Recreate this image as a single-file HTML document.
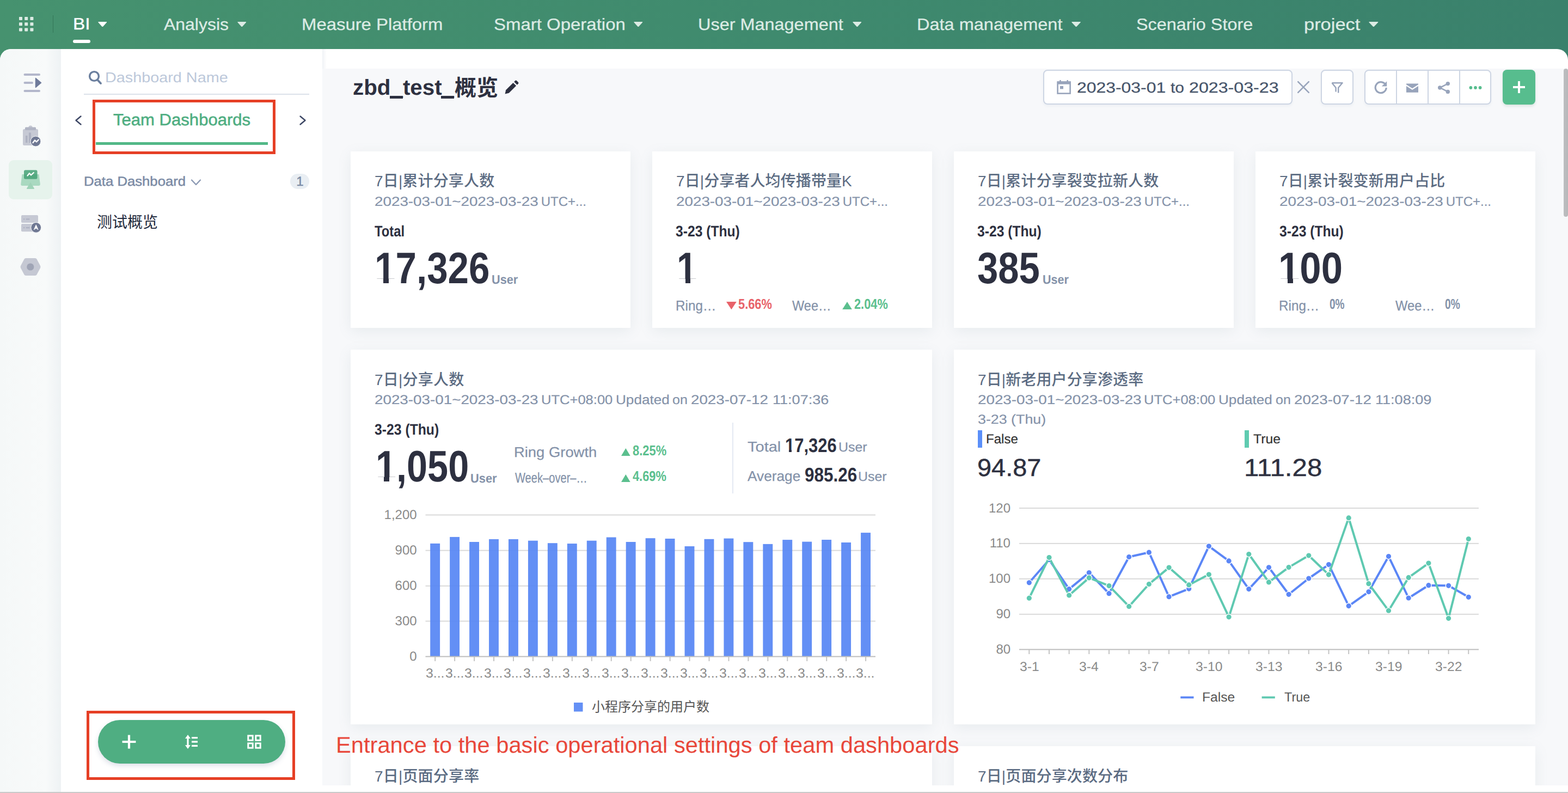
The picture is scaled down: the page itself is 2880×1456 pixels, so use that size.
<!DOCTYPE html>
<html lang="en"><head><meta charset="utf-8"><title>zbd_test dashboard</title><style>
html,body{margin:0;padding:0}
body{width:2880px;height:1456px;overflow:hidden;position:relative;background:#fff;font-family:"Liberation Sans",sans-serif}
.a,.t,.cj{position:absolute}
.t{white-space:pre;transform-origin:0 0;display:block;text-rendering:geometricPrecision}
.cj{overflow:visible}
.cj text{font-family:"Liberation Sans","Noto Sans CJK SC",sans-serif}
#hdr{left:0;top:0;width:2880px;height:120px;background:linear-gradient(90deg,#46926f 0%,#3f8a6e 50%,#3a816c 100%)}
#app{left:0;top:90px;width:2880px;height:1364px;background:#fff;border-radius:20px 20px 0 0;overflow:hidden}
#ib{left:0;top:0;width:112px;height:1364px;background:linear-gradient(90deg,#f5f8f8 0%,#f8fafa 75%,#eef2f4 100%)}
#mainbg{left:592px;top:36px;width:2288px;height:1316px;background:#f7f8fa}
#clip{left:592px;top:126px;width:2288px;height:1316px;overflow:hidden}
#clip>#inner{position:absolute;left:-592px;top:-126px;width:2880px;height:1456px}
</style></head>
<body>
<div class="a" id="hdr"></div>
<div class="a" id="app"><div class="a" id="ib"></div><div class="a" id="mainbg"></div></div>
<div class="a" style="left:592px;top:90px;width:8px;height:36px;background:linear-gradient(90deg,rgba(228,232,238,.55),rgba(255,255,255,0))"></div>
<svg class="a" style="left:34.5px;top:31px;" width="27" height="27" viewBox="0 0 27 27"><g fill="#dcebe4"><rect x="0.0" y="0.0" width="6" height="6" rx="0.8"/><rect x="0.0" y="10.2" width="6" height="6" rx="0.8"/><rect x="0.0" y="20.4" width="6" height="6" rx="0.8"/><rect x="10.2" y="0.0" width="6" height="6" rx="0.8"/><rect x="10.2" y="10.2" width="6" height="6" rx="0.8"/><rect x="10.2" y="20.4" width="6" height="6" rx="0.8"/><rect x="20.4" y="0.0" width="6" height="6" rx="0.8"/><rect x="20.4" y="10.2" width="6" height="6" rx="0.8"/><rect x="20.4" y="20.4" width="6" height="6" rx="0.8"/></g></svg>
<div class="a" style="left:96.5px;top:28px;width:1.5px;height:32px;background:rgba(20,70,50,.35)"></div>
<span class="t" style="left:134.22px;top:27.40px;font-size:30px;line-height:36px;color:#fff;transform:scaleX(1.1126);-webkit-text-stroke:0.4px #fff;">BI</span>
<svg class="a" style="left:180px;top:39.6px;" width="16.5" height="9.4" viewBox="0 0 16.5 9.4"><path d="M1.2 0.6 L15.30 0.6 L8.25 8.60 Z" fill="#fff" stroke="#fff" stroke-width="1.6" stroke-linejoin="round"/></svg>
<div class="a" style="left:134px;top:73px;width:32px;height:6px;background:#fff;border-radius:3px"></div>
<span class="t" style="left:301.00px;top:27.50px;font-size:30px;line-height:36px;color:#dcebe4;transform:scaleX(1.0654);-webkit-text-stroke:0.3px #dcebe4;">Analysis</span>
<svg class="a" style="left:436px;top:39.6px;" width="16.5" height="9.4" viewBox="0 0 16.5 9.4"><path d="M1.2 0.6 L15.30 0.6 L8.25 8.60 Z" fill="#dcebe4" stroke="#dcebe4" stroke-width="1.6" stroke-linejoin="round"/></svg>
<span class="t" style="left:553.76px;top:27.50px;font-size:30px;line-height:36px;color:#dcebe4;transform:scaleX(1.0958);-webkit-text-stroke:0.3px #dcebe4;">Measure Platform</span>
<span class="t" style="left:907.23px;top:27.50px;font-size:30px;line-height:36px;color:#dcebe4;transform:scaleX(1.0986);-webkit-text-stroke:0.3px #dcebe4;">Smart Operation</span>
<svg class="a" style="left:1164px;top:39.6px;" width="16.6" height="9.4" viewBox="0 0 16.6 9.4"><path d="M1.2 0.6 L15.40 0.6 L8.30 8.60 Z" fill="#dcebe4" stroke="#dcebe4" stroke-width="1.6" stroke-linejoin="round"/></svg>
<span class="t" style="left:1282.27px;top:27.50px;font-size:30px;line-height:36px;color:#dcebe4;transform:scaleX(1.0809);-webkit-text-stroke:0.3px #dcebe4;">User Management</span>
<svg class="a" style="left:1565.7px;top:39.6px;" width="16.8" height="9.4" viewBox="0 0 16.8 9.4"><path d="M1.2 0.6 L15.60 0.6 L8.40 8.60 Z" fill="#dcebe4" stroke="#dcebe4" stroke-width="1.6" stroke-linejoin="round"/></svg>
<span class="t" style="left:1683.89px;top:27.50px;font-size:30px;line-height:36px;color:#dcebe4;transform:scaleX(1.0837);-webkit-text-stroke:0.3px #dcebe4;">Data management</span>
<svg class="a" style="left:1967.5px;top:39.6px;" width="17.2" height="9.4" viewBox="0 0 17.2 9.4"><path d="M1.2 0.6 L16.00 0.6 L8.60 8.60 Z" fill="#dcebe4" stroke="#dcebe4" stroke-width="1.6" stroke-linejoin="round"/></svg>
<span class="t" style="left:2087.05px;top:27.50px;font-size:30px;line-height:36px;color:#dcebe4;transform:scaleX(1.0795);-webkit-text-stroke:0.3px #dcebe4;">Scenario Store</span>
<span class="t" style="left:2394.70px;top:27.50px;font-size:30px;line-height:36px;color:#dcebe4;transform:scaleX(1.1477);-webkit-text-stroke:0.3px #dcebe4;">project</span>
<svg class="a" style="left:2514px;top:39.6px;" width="17.7" height="9.4" viewBox="0 0 17.7 9.4"><path d="M1.2 0.6 L16.50 0.6 L8.85 8.60 Z" fill="#dcebe4" stroke="#dcebe4" stroke-width="1.6" stroke-linejoin="round"/></svg>
<svg class="a" style="left:43px;top:134px;" width="34" height="36" viewBox="0 0 34 36"><g fill="#b3b7cb"><rect x="0.5" y="1" width="30.5" height="4" rx="2"/><rect x="0.5" y="16" width="17.5" height="4" rx="2"/><rect x="0.5" y="31" width="30.5" height="4" rx="2"/></g><path d="M22.5 9.5 L32.5 18 L22.5 26.5 Z" fill="#6f7b9b" stroke="#6f7b9b" stroke-width="1.5" stroke-linejoin="round"/></svg>
<svg class="a" style="left:40px;top:229px;" width="38" height="42" viewBox="0 0 38 42"><circle cx="16" cy="5" r="3.6" fill="#c6c9d4"/><rect x="2" y="8" width="28" height="30" rx="2.5" fill="#c6c9d4"/><rect x="6" y="4.5" width="20" height="5.5" rx="1.5" fill="#b1b5c4"/><rect x="7" y="20" width="3.5" height="13" fill="#aeb2c2"/><rect x="13" y="14.5" width="4" height="18.5" fill="#aeb2c2"/><rect x="19.5" y="24" width="3" height="9" fill="#aeb2c2"/><circle cx="25.5" cy="30.5" r="9.4" fill="#6f7893" stroke="#f4f6f8" stroke-width="1"/><path d="M20.5 33 L24 28.5 L27 31.5 L30.8 27.5" fill="none" stroke="#fff" stroke-width="2.4" stroke-linejoin="round" stroke-linecap="round"/></svg>
<div class="a" style="left:16px;top:294px;width:80px;height:72px;background:#e6f3ec;border-radius:9px"></div>
<svg class="a" style="left:38px;top:311px;" width="38" height="38" viewBox="0 0 38 38"><path d="M2.5 9 H33.5 L35.8 27 Q36 30 33 30 H3 Q0 30 0.3 27 Z" fill="#a9d9c0"/><path d="M18 23.5 L25 35 Q25.3 36 24 36 H12 Q10.7 36 11 35 Z" fill="#9fd3b8"/><rect x="6" y="1.2" width="24.5" height="16.5" rx="2.5" fill="#3f9f72" fill-opacity="0.82"/><path d="M12.5 11.5 L16 7.2 L19 10.5 L23.8 6" fill="none" stroke="#fff" stroke-width="2.3" stroke-linejoin="round" stroke-linecap="round"/></svg>
<svg class="a" style="left:38px;top:393px;" width="40" height="36" viewBox="0 0 40 36"><rect x="1" y="2.1" width="31" height="14" rx="2" fill="#c6c9d4"/><rect x="1" y="18" width="31" height="14.2" rx="2" fill="#c6c9d4"/><g fill="#aeb2c2"><rect x="5" y="8.2" width="2.2" height="2.2"/><rect x="9.5" y="8.2" width="7" height="2.2" rx="1"/><rect x="5" y="24" width="2.2" height="2.2"/><rect x="9.5" y="24" width="7" height="2.2" rx="1"/></g><circle cx="28.2" cy="24.8" r="9.4" fill="#6f7893" stroke="#f4f6f8" stroke-width="1"/><path d="M24.3 28.8 L28.2 19.8 L32.1 28.8 L28.2 26 Z" fill="#fff" stroke="#fff" stroke-width="0.8" stroke-linejoin="round"/></svg>
<svg class="a" style="left:36px;top:472px;" width="40" height="36" viewBox="0 0 40 36"><path d="M11.5 2 H28.5 Q30.5 2 31.5 3.7 L38 16 Q39 18 38 20 L31.5 32.3 Q30.5 34 28.5 34 H11.5 Q9.5 34 8.5 32.3 L2 20 Q1 18 2 16 L8.5 3.7 Q9.5 2 11.5 2 Z" fill="#c5c8d3"/><circle cx="19.8" cy="18" r="6.6" fill="#9fa4b5"/></svg>
<svg class="a" style="left:162px;top:129px;" width="26" height="27" viewBox="0 0 26 27"><circle cx="11" cy="11" r="8.4" fill="none" stroke="#6b7f9e" stroke-width="3.4"/><path d="M17 17.5 L23 24" stroke="#6b7f9e" stroke-width="3.8" stroke-linecap="round"/></svg>
<span class="t" style="left:192.79px;top:126.89px;font-size:26px;line-height:31px;color:#bcc8da;transform:scaleX(1.1073);">Dashboard Name</span>
<div class="a" style="left:154px;top:172px;width:414px;height:2px;background:#dbe1ea"></div>
<svg class="a" style="left:136px;top:211px;" width="16" height="20" viewBox="0 0 16 20"><path d="M12.5 2.5 L3.5 10 L12.5 17.5" fill="none" stroke="#3c4664" stroke-width="2.4" stroke-linecap="round" stroke-linejoin="round"/></svg>
<svg class="a" style="left:548px;top:211px;" width="16" height="20" viewBox="0 0 16 20"><path d="M3.5 2.5 L12.5 10 L3.5 17.5" fill="none" stroke="#3c4664" stroke-width="2.4" stroke-linecap="round" stroke-linejoin="round"/></svg>
<span class="t" style="left:208.22px;top:203.30px;font-size:30px;line-height:36px;color:#4fae82;transform:scaleX(1.0357);-webkit-text-stroke:0.55px #4fae82;">Team Dashboards</span>
<div class="a" style="left:176px;top:261px;width:316px;height:4.5px;background:#53b887"></div>
<div class="a" style="left:170px;top:183px;width:336px;height:100px;border:5px solid #e63f25;box-sizing:border-box"></div>
<span class="t" style="left:153.56px;top:318.58px;font-size:24px;line-height:29px;color:#7b8ba5;transform:scaleX(1.0703);-webkit-text-stroke:0.5px #7b8ba5;">Data Dashboard</span>
<svg class="a" style="left:350px;top:328px;" width="20" height="14" viewBox="0 0 20 14"><path d="M2 2.5 L10 11 L18 2.5" fill="none" stroke="#8b99b3" stroke-width="2.4" stroke-linecap="round" stroke-linejoin="round"/></svg>
<div class="a" style="left:533px;top:319px;width:35px;height:28px;background:#e9eef3;border-radius:14px"></div>
<span class="t" style="left:544.25px;top:318.58px;font-size:24px;line-height:29px;color:#7b8ba5;-webkit-text-stroke:0.5px #7b8ba5;">1</span>
<svg class="cj" role="img" aria-label="测试概览" style="left:177.94px;top:392.86px" width="112.00" height="33.60"><text x="0" y="24.64" font-size="28" fill="#1f2a3d" textLength="112" lengthAdjust="spacing">测试概览</text></svg>
<div class="a" style="left:180px;top:1322px;width:344px;height:80px;background:#4fae82;border-radius:40px;box-shadow:0 4px 10px rgba(60,80,120,.18)"></div>
<svg class="a" style="left:224px;top:1349px;" width="26" height="26" viewBox="0 0 26 26"><path d="M13 0.6 V25.4 M0.6 13 H25.4" stroke="#fff" stroke-width="4.2"/></svg>
<svg class="a" style="left:339px;top:1348px;" width="26" height="28" viewBox="0 0 26 28"><g fill="#fff"><path d="M6 1 L11 8 H7.6 V20 H11 L6 27 L1 20 H4.4 V8 H1 Z"/><rect x="13" y="5" width="11" height="3.2"/><rect x="13" y="12.4" width="11" height="3.2"/><rect x="13" y="19.8" width="11" height="3.2"/></g></svg>
<svg class="a" style="left:454px;top:1349px;" width="26" height="26" viewBox="0 0 26 26"><g fill="none" stroke="#fff" stroke-width="3"><rect x="1.8" y="1.8" width="8.4" height="8.4"/><rect x="15.8" y="1.8" width="8.4" height="8.4"/><rect x="1.8" y="15.8" width="8.4" height="8.4"/><rect x="15.8" y="15.8" width="8.4" height="8.4"/></g></svg>
<div class="a" style="left:159px;top:1305px;width:382.5px;height:126.5px;border:5px solid #e63f25;box-sizing:border-box"></div>
<div class="a" id="clip"><div id="inner"><div class="a" style="left:644px;top:278px;width:514px;height:324px;background:#fff;box-shadow:0 6px 24px rgba(110,135,150,.11)"></div>
<div class="a" style="left:1198px;top:278px;width:514px;height:324px;background:#fff;box-shadow:0 6px 24px rgba(110,135,150,.11)"></div>
<div class="a" style="left:1752px;top:278px;width:514px;height:324px;background:#fff;box-shadow:0 6px 24px rgba(110,135,150,.11)"></div>
<div class="a" style="left:2306px;top:278px;width:514px;height:324px;background:#fff;box-shadow:0 6px 24px rgba(110,135,150,.11)"></div>
<svg class="cj" role="img" aria-label="7日|累计分享人数" style="left:687.60px;top:317.16px" width="220.22" height="33.60"><text x="0" y="24.64" font-size="28" font-weight="500" fill="#5b6b82" textLength="220.22" lengthAdjust="spacing">7日|累计分享人数</text></svg>
<span class="t" style="left:687.75px;top:356.18px;font-size:24px;line-height:29px;color:#8492a9;transform:scaleX(1.1584);-webkit-text-stroke:0.2px #8492a9;">2023-03-01~2023-03-23</span><span class="t" style="left:993.65px;top:356.18px;font-size:24px;line-height:29px;color:#8492a9;-webkit-text-stroke:0.2px #8492a9;">UTC+...</span>
<svg class="cj" role="img" aria-label="7日|分享者人均传播带量K" style="left:1241.60px;top:317.16px" width="322.81" height="33.60"><text x="0" y="24.64" font-size="28" font-weight="500" fill="#5b6b82" textLength="322.81" lengthAdjust="spacing">7日|分享者人均传播带量K</text></svg>
<span class="t" style="left:1241.75px;top:356.18px;font-size:24px;line-height:29px;color:#8492a9;transform:scaleX(1.1584);-webkit-text-stroke:0.2px #8492a9;">2023-03-01~2023-03-23</span><span class="t" style="left:1547.65px;top:356.18px;font-size:24px;line-height:29px;color:#8492a9;-webkit-text-stroke:0.2px #8492a9;">UTC+...</span>
<svg class="cj" role="img" aria-label="7日|累计分享裂变拉新人数" style="left:1795.60px;top:317.16px" width="332.22" height="33.60"><text x="0" y="24.64" font-size="28" font-weight="500" fill="#5b6b82" textLength="332.22" lengthAdjust="spacing">7日|累计分享裂变拉新人数</text></svg>
<span class="t" style="left:1795.75px;top:356.18px;font-size:24px;line-height:29px;color:#8492a9;transform:scaleX(1.1584);-webkit-text-stroke:0.2px #8492a9;">2023-03-01~2023-03-23</span><span class="t" style="left:2101.65px;top:356.18px;font-size:24px;line-height:29px;color:#8492a9;-webkit-text-stroke:0.2px #8492a9;">UTC+...</span>
<svg class="cj" role="img" aria-label="7日|累计裂变新用户占比" style="left:2349.60px;top:317.16px" width="304.22" height="33.60"><text x="0" y="24.64" font-size="28" font-weight="500" fill="#5b6b82" textLength="304.22" lengthAdjust="spacing">7日|累计裂变新用户占比</text></svg>
<span class="t" style="left:2349.75px;top:356.18px;font-size:24px;line-height:29px;color:#8492a9;transform:scaleX(1.1584);-webkit-text-stroke:0.2px #8492a9;">2023-03-01~2023-03-23</span><span class="t" style="left:2655.65px;top:356.18px;font-size:24px;line-height:29px;color:#8492a9;-webkit-text-stroke:0.2px #8492a9;">UTC+...</span>
<span class="t" style="left:688.39px;top:408.10px;font-size:28px;line-height:34px;color:#2d3040;font-weight:700;transform:scaleX(0.8496);">Total</span>
<span class="t" style="left:688.23px;top:444.73px;font-size:81px;line-height:97px;color:#2d3040;font-weight:700;transform:scaleX(0.8537);">17,326</span><div class="a" style="left:691.09px;top:512.23px;width:12.98px;height:9.77px;background:#fff"></div><div class="a" style="left:714.16px;top:512.23px;width:12.11px;height:9.77px;background:#fff"></div>
<span class="t" style="left:902.82px;top:499.33px;font-size:23px;line-height:28px;color:#8492a9;font-weight:700;transform:scaleX(0.9445);">User</span>
<span class="t" style="left:1241.34px;top:408.10px;font-size:28px;line-height:34px;color:#2d3040;font-weight:700;transform:scaleX(0.8805);">3-23 (Thu)</span>
<span class="t" style="left:1795.34px;top:408.10px;font-size:28px;line-height:34px;color:#2d3040;font-weight:700;transform:scaleX(0.8805);">3-23 (Thu)</span>
<span class="t" style="left:2349.54px;top:408.10px;font-size:28px;line-height:34px;color:#2d3040;font-weight:700;transform:scaleX(0.8805);">3-23 (Thu)</span>
<span class="t" style="left:1243.23px;top:444.73px;font-size:81px;line-height:97px;color:#2d3040;font-weight:700;transform:scaleX(0.8251);">1</span><div class="a" style="left:1245.94px;top:512.23px;width:12.59px;height:9.77px;background:#fff"></div><div class="a" style="left:1268.3px;top:512.23px;width:11.74px;height:9.77px;background:#fff"></div>
<span class="t" style="left:1240.91px;top:546.49px;font-size:26px;line-height:31px;color:#8492a9;transform:scaleX(0.9336);-webkit-text-stroke:0.25px #8492a9;">Ring…</span>
<svg class="a" style="left:1334px;top:554.2px;" width="18.8" height="14.3" viewBox="0 0 18.8 14.3"><path d="M0 0 L18.80 0 L9.40 14.30 Z" fill="#e8636a"/></svg>
<span class="t" style="left:1355.77px;top:543.29px;font-size:26px;line-height:31px;color:#e8636a;font-weight:700;transform:scaleX(0.8386);">5.66%</span>
<span class="t" style="left:1455.00px;top:546.49px;font-size:26px;line-height:31px;color:#8492a9;transform:scaleX(0.9062);-webkit-text-stroke:0.25px #8492a9;">Wee…</span>
<svg class="a" style="left:1547px;top:554px;" width="18" height="14.3" viewBox="0 0 18 14.3"><path d="M9.00 0 L18.00 14.30 L0 14.30 Z" fill="#5bbf8e"/></svg>
<span class="t" style="left:1568.56px;top:543.29px;font-size:26px;line-height:31px;color:#5bbf8e;font-weight:700;transform:scaleX(0.8374);">2.04%</span>
<span class="t" style="left:1795.11px;top:444.73px;font-size:81px;line-height:97px;color:#2d3040;font-weight:700;transform:scaleX(0.8503);">385</span>
<span class="t" style="left:1914.83px;top:499.33px;font-size:23px;line-height:28px;color:#8492a9;font-weight:700;transform:scaleX(0.9365);">User</span>
<span class="t" style="left:2348.43px;top:444.73px;font-size:81px;line-height:97px;color:#2d3040;font-weight:700;transform:scaleX(0.8733);">100</span><div class="a" style="left:2351.39px;top:512.23px;width:13.25px;height:9.77px;background:#fff"></div><div class="a" style="left:2374.95px;top:512.23px;width:12.36px;height:9.77px;background:#fff"></div>
<span class="t" style="left:2348.51px;top:546.49px;font-size:26px;line-height:31px;color:#8492a9;transform:scaleX(0.9324);-webkit-text-stroke:0.25px #8492a9;">Ring…</span>
<span class="t" style="left:2441.87px;top:543.29px;font-size:26px;line-height:31px;color:#8492a9;font-weight:700;transform:scaleX(0.7333);">0%</span>
<span class="t" style="left:2563.00px;top:546.49px;font-size:26px;line-height:31px;color:#8492a9;transform:scaleX(0.9133);-webkit-text-stroke:0.25px #8492a9;">Wee…</span>
<span class="t" style="left:2654.26px;top:543.29px;font-size:26px;line-height:31px;color:#8492a9;font-weight:700;transform:scaleX(0.7389);">0%</span>
<div class="a" style="left:644px;top:642px;width:1068px;height:688px;background:#fff;box-shadow:0 6px 24px rgba(110,135,150,.11)"></div>
<svg class="cj" role="img" aria-label="7日|分享人数" style="left:688.00px;top:682.36px" width="164.22" height="33.60"><text x="0" y="24.64" font-size="28" font-weight="500" fill="#5b6b82" textLength="164.22" lengthAdjust="spacing">7日|分享人数</text></svg>
<span class="t" style="left:687.85px;top:719.88px;font-size:24px;line-height:29px;color:#8492a9;transform:scaleX(1.1580);-webkit-text-stroke:0.2px #8492a9;">2023-03-01~2023-03-23</span><span class="t" style="left:993.64px;top:719.88px;font-size:24px;line-height:29px;color:#8492a9;transform:scaleX(1.0641);-webkit-text-stroke:0.2px #8492a9;">UTC+08:00</span><span class="t" style="left:1130.50px;top:719.88px;font-size:24px;line-height:29px;color:#8492a9;transform:scaleX(1.0879);-webkit-text-stroke:0.2px #8492a9;">Updated</span><span class="t" style="left:1234.96px;top:719.88px;font-size:24px;line-height:29px;color:#8492a9;transform:scaleX(1.0414);-webkit-text-stroke:0.2px #8492a9;">on</span><span class="t" style="left:1268.86px;top:719.88px;font-size:24px;line-height:29px;color:#8492a9;transform:scaleX(1.1552);-webkit-text-stroke:0.2px #8492a9;">2023-07-12</span><span class="t" style="left:1418.63px;top:719.88px;font-size:24px;line-height:29px;color:#8492a9;transform:scaleX(1.1279);-webkit-text-stroke:0.2px #8492a9;">11:07:36</span>
<span class="t" style="left:687.64px;top:772.30px;font-size:28px;line-height:34px;color:#2d3040;font-weight:700;transform:scaleX(0.8836);">3-23 (Thu)</span>
<span class="t" style="left:689.78px;top:808.93px;font-size:81px;line-height:97px;color:#2d3040;font-weight:700;transform:scaleX(0.8447);">1,050</span><div class="a" style="left:692.59px;top:876.43px;width:12.86px;height:9.77px;background:#fff"></div><div class="a" style="left:715.43px;top:876.43px;width:11.99px;height:9.77px;background:#fff"></div>
<span class="t" style="left:864.11px;top:863.53px;font-size:23px;line-height:28px;color:#8492a9;font-weight:700;transform:scaleX(0.9505);">User</span>
<span class="t" style="left:943.59px;top:814.89px;font-size:26px;line-height:31px;color:#8492a9;transform:scaleX(1.0537);-webkit-text-stroke:0.25px #8492a9;">Ring Growth</span>
<svg class="a" style="left:1141.3px;top:823px;" width="16.7" height="14" viewBox="0 0 16.7 14"><path d="M8.35 0 L16.70 14.00 L0 14.00 Z" fill="#5bbf8e"/></svg>
<span class="t" style="left:1161.67px;top:811.79px;font-size:26px;line-height:31px;color:#5bbf8e;font-weight:700;transform:scaleX(0.8442);">8.25%</span>
<span class="t" style="left:945.70px;top:862.49px;font-size:26px;line-height:31px;color:#8492a9;transform:scaleX(0.7734);-webkit-text-stroke:0.25px #8492a9;">Week–over–…</span>
<svg class="a" style="left:1141.3px;top:870.8px;" width="16.7" height="14.0" viewBox="0 0 16.7 14.0"><path d="M8.35 0 L16.70 14.00 L0 14.00 Z" fill="#5bbf8e"/></svg>
<span class="t" style="left:1162.09px;top:859.49px;font-size:26px;line-height:31px;color:#5bbf8e;font-weight:700;transform:scaleX(0.8384);">4.69%</span>
<div class="a" style="left:1345px;top:776px;width:2px;height:129.5px;background:#e4e9f2"></div>
<span class="t" style="left:1372.84px;top:805.19px;font-size:26px;line-height:31px;color:#8492a9;transform:scaleX(1.1166);-webkit-text-stroke:0.25px #8492a9;">Total</span>
<span class="t" style="left:1442.36px;top:795.73px;font-size:36px;line-height:43px;color:#2d3040;font-weight:700;transform:scaleX(0.8611);">17,326</span><div class="a" style="left:1442.82px;top:825.23px;width:6.48px;height:5.17px;background:#fff"></div><div class="a" style="left:1454.15px;top:825.23px;width:6.09px;height:5.17px;background:#fff"></div>
<span class="t" style="left:1539.69px;top:806.88px;font-size:24px;line-height:29px;color:#8492a9;transform:scaleX(1.0371);-webkit-text-stroke:0.25px #8492a9;">User</span>
<span class="t" style="left:1373.40px;top:859.49px;font-size:26px;line-height:31px;color:#8492a9;transform:scaleX(1.0100);-webkit-text-stroke:0.25px #8492a9;">Average</span>
<span class="t" style="left:1477.51px;top:850.03px;font-size:36px;line-height:43px;color:#2d3040;font-weight:700;transform:scaleX(0.8736);">985.26</span>
<span class="t" style="left:1576.18px;top:861.18px;font-size:24px;line-height:29px;color:#8492a9;transform:scaleX(1.0392);-webkit-text-stroke:0.25px #8492a9;">User</span>
<svg class="a" style="left:644px;top:900px;" width="1068" height="430" viewBox="0 0 1068 430"><rect x="137.5" y="44.5" width="826.5" height="2" fill="#dadada"/><rect x="137.5" y="109.7" width="826.5" height="2" fill="#dadada"/><rect x="137.5" y="174.8" width="826.5" height="2" fill="#dadada"/><rect x="137.5" y="239.5" width="826.5" height="2" fill="#dadada"/><rect x="146.20" y="97.9" width="17.9" height="207.6" fill="#5686f4" fill-opacity="0.92"/><rect x="182.15" y="85.9" width="17.9" height="219.6" fill="#5686f4" fill-opacity="0.92"/><rect x="218.10" y="95.0" width="17.9" height="210.5" fill="#5686f4" fill-opacity="0.92"/><rect x="254.05" y="90.0" width="17.9" height="215.5" fill="#5686f4" fill-opacity="0.92"/><rect x="290.00" y="90.0" width="17.9" height="215.5" fill="#5686f4" fill-opacity="0.92"/><rect x="325.95" y="92.7" width="17.9" height="212.8" fill="#5686f4" fill-opacity="0.92"/><rect x="361.90" y="97.2" width="17.9" height="208.3" fill="#5686f4" fill-opacity="0.92"/><rect x="397.85" y="98.1" width="17.9" height="207.4" fill="#5686f4" fill-opacity="0.92"/><rect x="433.80" y="92.7" width="17.9" height="212.8" fill="#5686f4" fill-opacity="0.92"/><rect x="469.75" y="86.5" width="17.9" height="219.0" fill="#5686f4" fill-opacity="0.92"/><rect x="505.70" y="95.0" width="17.9" height="210.5" fill="#5686f4" fill-opacity="0.92"/><rect x="541.65" y="88.2" width="17.9" height="217.3" fill="#5686f4" fill-opacity="0.92"/><rect x="577.60" y="89.0" width="17.9" height="216.5" fill="#5686f4" fill-opacity="0.92"/><rect x="613.55" y="103.0" width="17.9" height="202.5" fill="#5686f4" fill-opacity="0.92"/><rect x="649.50" y="89.8" width="17.9" height="215.7" fill="#5686f4" fill-opacity="0.92"/><rect x="685.45" y="88.6" width="17.9" height="216.9" fill="#5686f4" fill-opacity="0.92"/><rect x="721.40" y="95.2" width="17.9" height="210.3" fill="#5686f4" fill-opacity="0.92"/><rect x="757.35" y="98.9" width="17.9" height="206.6" fill="#5686f4" fill-opacity="0.92"/><rect x="793.30" y="91.1" width="17.9" height="214.4" fill="#5686f4" fill-opacity="0.92"/><rect x="829.25" y="94.6" width="17.9" height="210.9" fill="#5686f4" fill-opacity="0.92"/><rect x="865.20" y="91.0" width="17.9" height="214.5" fill="#5686f4" fill-opacity="0.92"/><rect x="901.15" y="96.0" width="17.9" height="209.5" fill="#5686f4" fill-opacity="0.92"/><rect x="937.10" y="78.1" width="17.9" height="227.4" fill="#5686f4" fill-opacity="0.92"/><rect x="137.5" y="304.5" width="826.5" height="2" fill="#bdbdbd"/><rect x="154.20" y="305.5" width="2" height="8.5" fill="#c4c4c4"/><rect x="190.15" y="305.5" width="2" height="8.5" fill="#c4c4c4"/><rect x="226.10" y="305.5" width="2" height="8.5" fill="#c4c4c4"/><rect x="262.05" y="305.5" width="2" height="8.5" fill="#c4c4c4"/><rect x="298.00" y="305.5" width="2" height="8.5" fill="#c4c4c4"/><rect x="333.95" y="305.5" width="2" height="8.5" fill="#c4c4c4"/><rect x="369.90" y="305.5" width="2" height="8.5" fill="#c4c4c4"/><rect x="405.85" y="305.5" width="2" height="8.5" fill="#c4c4c4"/><rect x="441.80" y="305.5" width="2" height="8.5" fill="#c4c4c4"/><rect x="477.75" y="305.5" width="2" height="8.5" fill="#c4c4c4"/><rect x="513.70" y="305.5" width="2" height="8.5" fill="#c4c4c4"/><rect x="549.65" y="305.5" width="2" height="8.5" fill="#c4c4c4"/><rect x="585.60" y="305.5" width="2" height="8.5" fill="#c4c4c4"/><rect x="621.55" y="305.5" width="2" height="8.5" fill="#c4c4c4"/><rect x="657.50" y="305.5" width="2" height="8.5" fill="#c4c4c4"/><rect x="693.45" y="305.5" width="2" height="8.5" fill="#c4c4c4"/><rect x="729.40" y="305.5" width="2" height="8.5" fill="#c4c4c4"/><rect x="765.35" y="305.5" width="2" height="8.5" fill="#c4c4c4"/><rect x="801.30" y="305.5" width="2" height="8.5" fill="#c4c4c4"/><rect x="837.25" y="305.5" width="2" height="8.5" fill="#c4c4c4"/><rect x="873.20" y="305.5" width="2" height="8.5" fill="#c4c4c4"/><rect x="909.15" y="305.5" width="2" height="8.5" fill="#c4c4c4"/><rect x="945.10" y="305.5" width="2" height="8.5" fill="#c4c4c4"/><rect x="410" y="390" width="16.5" height="16.5" fill="#6490f5"/></svg>
<span class="t" style="left:705.55px;top:931.08px;font-size:24px;line-height:29px;color:#8a8a8a;">1,200</span>
<span class="t" style="left:725.55px;top:996.28px;font-size:24px;line-height:29px;color:#8a8a8a;">900</span>
<span class="t" style="left:725.55px;top:1061.38px;font-size:24px;line-height:29px;color:#8a8a8a;">600</span>
<span class="t" style="left:725.55px;top:1126.08px;font-size:24px;line-height:29px;color:#8a8a8a;">300</span>
<span class="t" style="left:752.30px;top:1191.08px;font-size:24px;line-height:29px;color:#8a8a8a;">0</span>
<span class="t" style="left:781.57px;top:1222.48px;font-size:24px;line-height:29px;color:#8a8a8a;transform:scaleX(1.0345);">3...</span>
<span class="t" style="left:817.52px;top:1222.48px;font-size:24px;line-height:29px;color:#8a8a8a;transform:scaleX(1.0345);">3...</span>
<span class="t" style="left:853.47px;top:1222.48px;font-size:24px;line-height:29px;color:#8a8a8a;transform:scaleX(1.0345);">3...</span>
<span class="t" style="left:889.42px;top:1222.48px;font-size:24px;line-height:29px;color:#8a8a8a;transform:scaleX(1.0345);">3...</span>
<span class="t" style="left:925.37px;top:1222.48px;font-size:24px;line-height:29px;color:#8a8a8a;transform:scaleX(1.0345);">3...</span>
<span class="t" style="left:961.32px;top:1222.48px;font-size:24px;line-height:29px;color:#8a8a8a;transform:scaleX(1.0345);">3...</span>
<span class="t" style="left:997.27px;top:1222.48px;font-size:24px;line-height:29px;color:#8a8a8a;transform:scaleX(1.0345);">3...</span>
<span class="t" style="left:1033.22px;top:1222.48px;font-size:24px;line-height:29px;color:#8a8a8a;transform:scaleX(1.0345);">3...</span>
<span class="t" style="left:1069.17px;top:1222.48px;font-size:24px;line-height:29px;color:#8a8a8a;transform:scaleX(1.0345);">3...</span>
<span class="t" style="left:1105.12px;top:1222.48px;font-size:24px;line-height:29px;color:#8a8a8a;transform:scaleX(1.0345);">3...</span>
<span class="t" style="left:1141.07px;top:1222.48px;font-size:24px;line-height:29px;color:#8a8a8a;transform:scaleX(1.0345);">3...</span>
<span class="t" style="left:1177.02px;top:1222.48px;font-size:24px;line-height:29px;color:#8a8a8a;transform:scaleX(1.0345);">3...</span>
<span class="t" style="left:1212.97px;top:1222.48px;font-size:24px;line-height:29px;color:#8a8a8a;transform:scaleX(1.0345);">3...</span>
<span class="t" style="left:1248.92px;top:1222.48px;font-size:24px;line-height:29px;color:#8a8a8a;transform:scaleX(1.0345);">3...</span>
<span class="t" style="left:1284.87px;top:1222.48px;font-size:24px;line-height:29px;color:#8a8a8a;transform:scaleX(1.0345);">3...</span>
<span class="t" style="left:1320.82px;top:1222.48px;font-size:24px;line-height:29px;color:#8a8a8a;transform:scaleX(1.0345);">3...</span>
<span class="t" style="left:1356.77px;top:1222.48px;font-size:24px;line-height:29px;color:#8a8a8a;transform:scaleX(1.0345);">3...</span>
<span class="t" style="left:1392.72px;top:1222.48px;font-size:24px;line-height:29px;color:#8a8a8a;transform:scaleX(1.0345);">3...</span>
<span class="t" style="left:1428.67px;top:1222.48px;font-size:24px;line-height:29px;color:#8a8a8a;transform:scaleX(1.0345);">3...</span>
<span class="t" style="left:1464.62px;top:1222.48px;font-size:24px;line-height:29px;color:#8a8a8a;transform:scaleX(1.0345);">3...</span>
<span class="t" style="left:1500.57px;top:1222.48px;font-size:24px;line-height:29px;color:#8a8a8a;transform:scaleX(1.0345);">3...</span>
<span class="t" style="left:1536.52px;top:1222.48px;font-size:24px;line-height:29px;color:#8a8a8a;transform:scaleX(1.0345);">3...</span>
<span class="t" style="left:1572.47px;top:1222.48px;font-size:24px;line-height:29px;color:#8a8a8a;transform:scaleX(1.0345);">3...</span>
<svg class="cj" role="img" aria-label="小程序分享的用户数" style="left:1086.73px;top:1285.18px" width="216.00" height="28.80"><text x="0" y="21.12" font-size="24" fill="#555" textLength="216" lengthAdjust="spacing">小程序分享的用户数</text></svg>
<div class="a" style="left:1752px;top:642px;width:1068px;height:688px;background:#fff;box-shadow:0 6px 24px rgba(110,135,150,.11)"></div>
<svg class="cj" role="img" aria-label="7日|新老用户分享渗透率" style="left:1795.80px;top:682.36px" width="304.22" height="33.60"><text x="0" y="24.64" font-size="28" font-weight="500" fill="#5b6b82" textLength="304.22" lengthAdjust="spacing">7日|新老用户分享渗透率</text></svg>
<span class="t" style="left:1795.65px;top:720.08px;font-size:24px;line-height:29px;color:#8492a9;transform:scaleX(1.1580);-webkit-text-stroke:0.2px #8492a9;">2023-03-01~2023-03-23</span><span class="t" style="left:2101.44px;top:720.08px;font-size:24px;line-height:29px;color:#8492a9;transform:scaleX(1.0641);-webkit-text-stroke:0.2px #8492a9;">UTC+08:00</span><span class="t" style="left:2238.30px;top:720.08px;font-size:24px;line-height:29px;color:#8492a9;transform:scaleX(1.0879);-webkit-text-stroke:0.2px #8492a9;">Updated</span><span class="t" style="left:2342.76px;top:720.08px;font-size:24px;line-height:29px;color:#8492a9;transform:scaleX(1.0414);-webkit-text-stroke:0.2px #8492a9;">on</span><span class="t" style="left:2376.66px;top:720.08px;font-size:24px;line-height:29px;color:#8492a9;transform:scaleX(1.1552);-webkit-text-stroke:0.2px #8492a9;">2023-07-12</span><span class="t" style="left:2526.43px;top:720.08px;font-size:24px;line-height:29px;color:#8492a9;transform:scaleX(1.1279);-webkit-text-stroke:0.2px #8492a9;">11:08:09</span>
<span class="t" style="left:1796.08px;top:755.98px;font-size:24px;line-height:29px;color:#8492a9;transform:scaleX(1.1169);-webkit-text-stroke:0.2px #8492a9;">3-23 (Thu)</span>
<div class="a" style="left:1796px;top:790.4px;width:8px;height:31.3px;background:#5b8ff9"></div>
<span class="t" style="left:1810.99px;top:792.08px;font-size:24px;line-height:29px;color:#333;transform:scaleX(1.0036);-webkit-text-stroke:0.2px #333;">False</span>
<span class="t" style="left:1794.62px;top:832.11px;font-size:45px;line-height:54px;color:#2d3040;transform:scaleX(1.0419);-webkit-text-stroke:0.45px #2d3040;">94.87</span>
<div class="a" style="left:2286.3px;top:790.4px;width:8px;height:31.3px;background:#5fcbb0"></div>
<span class="t" style="left:2302.18px;top:792.08px;font-size:24px;line-height:29px;color:#333;transform:scaleX(1.0329);-webkit-text-stroke:0.2px #333;">True</span>
<span class="t" style="left:2284.67px;top:832.11px;font-size:45px;line-height:54px;color:#2d3040;transform:scaleX(1.0940);-webkit-text-stroke:0.45px #2d3040;">111.28</span>
<svg class="a" style="left:1752px;top:900px;" width="1068" height="430" viewBox="0 0 1068 430"><rect x="120" y="32.0" width="844" height="2" fill="#dadada"/><rect x="120" y="96.9" width="844" height="2" fill="#dadada"/><rect x="120" y="161.8" width="844" height="2" fill="#dadada"/><rect x="120" y="226.8" width="844" height="2" fill="#dadada"/><rect x="120" y="291.5" width="844" height="2" fill="#bdbdbd"/><rect x="137.30" y="292.5" width="2" height="8.5" fill="#c4c4c4"/><rect x="173.98" y="292.5" width="2" height="8.5" fill="#c4c4c4"/><rect x="210.66" y="292.5" width="2" height="8.5" fill="#c4c4c4"/><rect x="247.34" y="292.5" width="2" height="8.5" fill="#c4c4c4"/><rect x="284.02" y="292.5" width="2" height="8.5" fill="#c4c4c4"/><rect x="320.70" y="292.5" width="2" height="8.5" fill="#c4c4c4"/><rect x="357.38" y="292.5" width="2" height="8.5" fill="#c4c4c4"/><rect x="394.06" y="292.5" width="2" height="8.5" fill="#c4c4c4"/><rect x="430.74" y="292.5" width="2" height="8.5" fill="#c4c4c4"/><rect x="467.42" y="292.5" width="2" height="8.5" fill="#c4c4c4"/><rect x="504.10" y="292.5" width="2" height="8.5" fill="#c4c4c4"/><rect x="540.78" y="292.5" width="2" height="8.5" fill="#c4c4c4"/><rect x="577.46" y="292.5" width="2" height="8.5" fill="#c4c4c4"/><rect x="614.14" y="292.5" width="2" height="8.5" fill="#c4c4c4"/><rect x="650.82" y="292.5" width="2" height="8.5" fill="#c4c4c4"/><rect x="687.50" y="292.5" width="2" height="8.5" fill="#c4c4c4"/><rect x="724.18" y="292.5" width="2" height="8.5" fill="#c4c4c4"/><rect x="760.86" y="292.5" width="2" height="8.5" fill="#c4c4c4"/><rect x="797.54" y="292.5" width="2" height="8.5" fill="#c4c4c4"/><rect x="834.22" y="292.5" width="2" height="8.5" fill="#c4c4c4"/><rect x="870.90" y="292.5" width="2" height="8.5" fill="#c4c4c4"/><rect x="907.58" y="292.5" width="2" height="8.5" fill="#c4c4c4"/><rect x="944.26" y="292.5" width="2" height="8.5" fill="#c4c4c4"/><polyline points="138.3,169.8 175.0,127.7 211.7,181.6 248.3,151.5 285.0,189.7 321.7,122.5 358.4,114.2 395.1,195.7 431.7,181.1 468.4,102.8 505.1,129.9 541.8,181.6 578.5,141.8 615.1,191.3 651.8,162.0 688.5,136.6 725.2,212.6 761.9,186.6 798.5,121.6 835.2,198.0 871.9,174.7 908.6,175.3 945.3,196.3" fill="none" stroke="#5b86f6" stroke-width="4" stroke-linejoin="round"/><circle cx="138.3" cy="169.8" r="5.3" fill="#5b86f6" stroke="#fff" stroke-width="1.4"/><circle cx="175.0" cy="127.7" r="5.3" fill="#5b86f6" stroke="#fff" stroke-width="1.4"/><circle cx="211.7" cy="181.6" r="5.3" fill="#5b86f6" stroke="#fff" stroke-width="1.4"/><circle cx="248.3" cy="151.5" r="5.3" fill="#5b86f6" stroke="#fff" stroke-width="1.4"/><circle cx="285.0" cy="189.7" r="5.3" fill="#5b86f6" stroke="#fff" stroke-width="1.4"/><circle cx="321.7" cy="122.5" r="5.3" fill="#5b86f6" stroke="#fff" stroke-width="1.4"/><circle cx="358.4" cy="114.2" r="5.3" fill="#5b86f6" stroke="#fff" stroke-width="1.4"/><circle cx="395.1" cy="195.7" r="5.3" fill="#5b86f6" stroke="#fff" stroke-width="1.4"/><circle cx="431.7" cy="181.1" r="5.3" fill="#5b86f6" stroke="#fff" stroke-width="1.4"/><circle cx="468.4" cy="102.8" r="5.3" fill="#5b86f6" stroke="#fff" stroke-width="1.4"/><circle cx="505.1" cy="129.9" r="5.3" fill="#5b86f6" stroke="#fff" stroke-width="1.4"/><circle cx="541.8" cy="181.6" r="5.3" fill="#5b86f6" stroke="#fff" stroke-width="1.4"/><circle cx="578.5" cy="141.8" r="5.3" fill="#5b86f6" stroke="#fff" stroke-width="1.4"/><circle cx="615.1" cy="191.3" r="5.3" fill="#5b86f6" stroke="#fff" stroke-width="1.4"/><circle cx="651.8" cy="162.0" r="5.3" fill="#5b86f6" stroke="#fff" stroke-width="1.4"/><circle cx="688.5" cy="136.6" r="5.3" fill="#5b86f6" stroke="#fff" stroke-width="1.4"/><circle cx="725.2" cy="212.6" r="5.3" fill="#5b86f6" stroke="#fff" stroke-width="1.4"/><circle cx="761.9" cy="186.6" r="5.3" fill="#5b86f6" stroke="#fff" stroke-width="1.4"/><circle cx="798.5" cy="121.6" r="5.3" fill="#5b86f6" stroke="#fff" stroke-width="1.4"/><circle cx="835.2" cy="198.0" r="5.3" fill="#5b86f6" stroke="#fff" stroke-width="1.4"/><circle cx="871.9" cy="174.7" r="5.3" fill="#5b86f6" stroke="#fff" stroke-width="1.4"/><circle cx="908.6" cy="175.3" r="5.3" fill="#5b86f6" stroke="#fff" stroke-width="1.4"/><circle cx="945.3" cy="196.3" r="5.3" fill="#5b86f6" stroke="#fff" stroke-width="1.4"/><polyline points="138.3,198.2 175.0,123.6 211.7,193.0 248.3,160.9 285.0,175.6 321.7,213.4 358.4,172.5 395.1,142.1 431.7,173.9 468.4,154.8 505.1,232.8 541.8,117.5 578.5,168.9 615.1,141.6 651.8,120.0 688.5,155.1 725.2,50.9 761.9,171.7 798.5,221.2 835.2,160.4 871.9,134.1 908.6,235.3 945.3,89.6" fill="none" stroke="#5fc9b1" stroke-width="4" stroke-linejoin="round"/><circle cx="138.3" cy="198.2" r="5.3" fill="#5fc9b1" stroke="#fff" stroke-width="1.4"/><circle cx="175.0" cy="123.6" r="5.3" fill="#5fc9b1" stroke="#fff" stroke-width="1.4"/><circle cx="211.7" cy="193.0" r="5.3" fill="#5fc9b1" stroke="#fff" stroke-width="1.4"/><circle cx="248.3" cy="160.9" r="5.3" fill="#5fc9b1" stroke="#fff" stroke-width="1.4"/><circle cx="285.0" cy="175.6" r="5.3" fill="#5fc9b1" stroke="#fff" stroke-width="1.4"/><circle cx="321.7" cy="213.4" r="5.3" fill="#5fc9b1" stroke="#fff" stroke-width="1.4"/><circle cx="358.4" cy="172.5" r="5.3" fill="#5fc9b1" stroke="#fff" stroke-width="1.4"/><circle cx="395.1" cy="142.1" r="5.3" fill="#5fc9b1" stroke="#fff" stroke-width="1.4"/><circle cx="431.7" cy="173.9" r="5.3" fill="#5fc9b1" stroke="#fff" stroke-width="1.4"/><circle cx="468.4" cy="154.8" r="5.3" fill="#5fc9b1" stroke="#fff" stroke-width="1.4"/><circle cx="505.1" cy="232.8" r="5.3" fill="#5fc9b1" stroke="#fff" stroke-width="1.4"/><circle cx="541.8" cy="117.5" r="5.3" fill="#5fc9b1" stroke="#fff" stroke-width="1.4"/><circle cx="578.5" cy="168.9" r="5.3" fill="#5fc9b1" stroke="#fff" stroke-width="1.4"/><circle cx="615.1" cy="141.6" r="5.3" fill="#5fc9b1" stroke="#fff" stroke-width="1.4"/><circle cx="651.8" cy="120.0" r="5.3" fill="#5fc9b1" stroke="#fff" stroke-width="1.4"/><circle cx="688.5" cy="155.1" r="5.3" fill="#5fc9b1" stroke="#fff" stroke-width="1.4"/><circle cx="725.2" cy="50.9" r="5.3" fill="#5fc9b1" stroke="#fff" stroke-width="1.4"/><circle cx="761.9" cy="171.7" r="5.3" fill="#5fc9b1" stroke="#fff" stroke-width="1.4"/><circle cx="798.5" cy="221.2" r="5.3" fill="#5fc9b1" stroke="#fff" stroke-width="1.4"/><circle cx="835.2" cy="160.4" r="5.3" fill="#5fc9b1" stroke="#fff" stroke-width="1.4"/><circle cx="871.9" cy="134.1" r="5.3" fill="#5fc9b1" stroke="#fff" stroke-width="1.4"/><circle cx="908.6" cy="235.3" r="5.3" fill="#5fc9b1" stroke="#fff" stroke-width="1.4"/><circle cx="945.3" cy="89.6" r="5.3" fill="#5fc9b1" stroke="#fff" stroke-width="1.4"/><rect x="416.3000000000002" y="378.5999999999999" width="24.2" height="3.8" fill="#5b86f6"/><rect x="565.5999999999999" y="378.5999999999999" width="24.2" height="3.8" fill="#5fc9b1"/></svg>
<span class="t" style="left:1815.95px;top:918.58px;font-size:24px;line-height:29px;color:#8a8a8a;">120</span>
<span class="t" style="left:1817.70px;top:983.48px;font-size:24px;line-height:29px;color:#8a8a8a;">110</span>
<span class="t" style="left:1815.95px;top:1048.38px;font-size:24px;line-height:29px;color:#8a8a8a;">100</span>
<span class="t" style="left:1829.45px;top:1113.38px;font-size:24px;line-height:29px;color:#8a8a8a;">90</span>
<span class="t" style="left:1829.45px;top:1178.08px;font-size:24px;line-height:29px;color:#8a8a8a;">80</span>
<span class="t" style="left:1872.53px;top:1209.78px;font-size:24px;line-height:29px;color:#8a8a8a;transform:scaleX(1.0300);">3-1</span>
<span class="t" style="left:1982.32px;top:1209.78px;font-size:24px;line-height:29px;color:#8a8a8a;transform:scaleX(1.0300);">3-4</span>
<span class="t" style="left:2092.61px;top:1209.78px;font-size:24px;line-height:29px;color:#8a8a8a;transform:scaleX(1.0300);">3-7</span>
<span class="t" style="left:2195.57px;top:1209.78px;font-size:24px;line-height:29px;color:#8a8a8a;transform:scaleX(1.0297);">3-10</span>
<span class="t" style="left:2305.74px;top:1209.78px;font-size:24px;line-height:29px;color:#8a8a8a;transform:scaleX(1.0297);">3-13</span>
<span class="t" style="left:2415.78px;top:1209.78px;font-size:24px;line-height:29px;color:#8a8a8a;transform:scaleX(1.0297);">3-16</span>
<span class="t" style="left:2525.82px;top:1209.78px;font-size:24px;line-height:29px;color:#8a8a8a;transform:scaleX(1.0297);">3-19</span>
<span class="t" style="left:2635.86px;top:1209.78px;font-size:24px;line-height:29px;color:#8a8a8a;transform:scaleX(1.0297);">3-22</span>
<span class="t" style="left:2208.35px;top:1265.98px;font-size:24px;line-height:29px;color:#555;transform:scaleX(1.0270);">False</span>
<span class="t" style="left:2359.01px;top:1265.98px;font-size:24px;line-height:29px;color:#555;transform:scaleX(0.9730);">True</span>
<div class="a" style="left:644px;top:1370px;width:1068px;height:90px;background:#fff;box-shadow:0 6px 24px rgba(110,135,150,.11)"></div>
<div class="a" style="left:1752px;top:1370px;width:1068px;height:90px;background:#fff;box-shadow:0 6px 24px rgba(110,135,150,.11)"></div>
<svg class="cj" role="img" aria-label="7日|页面分享率" style="left:688.00px;top:1409.76px" width="192.22" height="33.60"><text x="0" y="24.64" font-size="28" font-weight="500" fill="#5b6b82" textLength="192.22" lengthAdjust="spacing">7日|页面分享率</text></svg>
<svg class="cj" role="img" aria-label="7日|页面分享次数分布" style="left:1795.80px;top:1409.76px" width="276.22" height="33.60"><text x="0" y="24.64" font-size="28" font-weight="500" fill="#5b6b82" textLength="276.22" lengthAdjust="spacing">7日|页面分享次数分布</text></svg>
<span class="t" style="left:647.99px;top:137.04px;font-size:40px;line-height:48px;color:#2d3040;font-weight:700;transform:scaleX(1.0084);">zbd_test_</span>
<svg class="cj" role="img" aria-label="概览" style="left:834.82px;top:140.00px" width="80.00" height="48.00"><text x="0" y="35.2" font-size="40" font-weight="700" fill="#2d3040" textLength="80" lengthAdjust="spacing">概览</text></svg>
<div class="a" style="left:716.3px;top:176px;width:24px;height:4.7px;background:#2d3040"></div>
<div class="a" style="left:810.2px;top:176px;width:24.1px;height:4.7px;background:#2d3040"></div>
<svg class="a" style="left:926px;top:146px;" width="28" height="28" viewBox="0 0 28 28"><g fill="#2d3040"><path d="M3.2 19.2 L16.5 5.9 L22.1 11.5 L8.8 24.8 L1.6 26.6 Z"/><path d="M18.2 4.2 L20.3 2.1 Q21.6 0.9 22.9 2.1 L25.9 5.1 Q27.1 6.4 25.9 7.7 L23.8 9.8 Z"/></g></svg>
<div class="a" style="left:1916px;top:128px;width:458px;height:64px;border:2px solid #cdd5e3;box-sizing:border-box;border-radius:8px;background:#fff;box-shadow:0 3px 4px rgba(120,140,170,.07)"></div>
<svg class="a" style="left:1941px;top:146px;" width="27" height="28" viewBox="0 0 27 28"><g fill="none" stroke="#98a4bb" stroke-width="2.6"><rect x="1.6" y="4.6" width="23" height="21"/></g><g fill="#98a4bb"><rect x="1" y="3.5" width="24.5" height="5.2"/><rect x="5.2" y="1" width="2.6" height="4"/><rect x="18.4" y="1" width="2.6" height="4"/><rect x="6" y="12" width="6" height="5.4"/></g></svg>
<span class="t" style="left:1977.92px;top:144.94px;font-size:27px;line-height:32px;color:#46546a;transform:scaleX(1.1814);-webkit-text-stroke:0.25px #46546a;">2023-03-01</span><span class="t" style="left:2150.44px;top:144.94px;font-size:27px;line-height:32px;color:#46546a;transform:scaleX(1.1135);-webkit-text-stroke:0.25px #46546a;">to</span><span class="t" style="left:2184.21px;top:144.94px;font-size:27px;line-height:32px;color:#46546a;transform:scaleX(1.1917);-webkit-text-stroke:0.25px #46546a;">2023-03-23</span>
<svg class="a" style="left:2382px;top:148px;" width="24" height="24" viewBox="0 0 24 24"><path d="M2.2 2.2 L21.8 21.8 M21.8 2.2 L2.2 21.8" stroke="#98a4bb" stroke-width="2.6" stroke-linecap="round"/></svg>
<div class="a" style="left:2426px;top:128px;width:59.5px;height:64px;border:2px solid #cdd5e3;box-sizing:border-box;border-radius:8px;background:#fff;box-shadow:0 3px 4px rgba(120,140,170,.07)"></div>
<svg class="a" style="left:2445px;top:150px;" width="22" height="22" viewBox="0 0 22 22"><path d="M1.4 2.2 H20.6 L13.2 11 V20.6 M8.6 11 L1.4 2.2 M8.6 10.5 V18.6" fill="none" stroke="#98a4bb" stroke-width="2.4" stroke-linejoin="round"/></svg>
<div class="a" style="left:2506px;top:128px;width:233px;height:64px;border:2px solid #cdd5e3;box-sizing:border-box;border-radius:8px;background:#fff;box-shadow:0 3px 4px rgba(120,140,170,.07)"></div>
<div class="a" style="left:2564px;top:130px;width:2px;height:60px;background:#cdd5e3"></div>
<div class="a" style="left:2622px;top:130px;width:2px;height:60px;background:#cdd5e3"></div>
<div class="a" style="left:2680px;top:130px;width:2px;height:60px;background:#cdd5e3"></div>
<svg class="a" style="left:2522px;top:147px;" width="28" height="28" viewBox="0 0 28 28"><path d="M22.6 8.2 A10 10 0 1 0 24.2 14" fill="none" stroke="#98a4bb" stroke-width="3.2"/><path d="M25.2 2.2 V11.6 H15.8 Z" fill="#98a4bb"/></svg>
<svg class="a" style="left:2582px;top:152px;" width="24" height="20" viewBox="0 0 24 20"><g fill="#98a4bb"><path d="M1 1.5 H23 V3.2 L12 10.2 L1 3.2 Z"/><path d="M1 6 L12 13 L23 6 V17.8 H1 Z"/></g></svg>
<svg class="a" style="left:2640px;top:149px;" width="24" height="24" viewBox="0 0 24 24"><g fill="#98a4bb"><circle cx="19.3" cy="4.6" r="3.7"/><circle cx="4.7" cy="12" r="3.7"/><circle cx="19.3" cy="19.4" r="3.7"/></g><path d="M19.3 4.6 L4.7 12 L19.3 19.4" fill="none" stroke="#98a4bb" stroke-width="2.6"/></svg>
<svg class="a" style="left:2698px;top:157px;" width="24" height="8" viewBox="0 0 24 8"><g fill="#57bd8e"><circle cx="3.4" cy="4" r="2.9"/><circle cx="12" cy="4" r="2.9"/><circle cx="20.6" cy="4" r="2.9"/></g></svg>
<div class="a" style="left:2760px;top:128px;width:60px;height:64px;background:#57bd8e;border-radius:8px;box-shadow:0 3px 5px rgba(60,120,90,.15)"></div>
<svg class="a" style="left:2779px;top:149px;" width="22" height="22" viewBox="0 0 22 22"><path d="M11 0 V22 M0 11 H22" stroke="#fff" stroke-width="4"/></svg></div></div>
<div class="a" style="left:2872px;top:126px;width:8px;height:271.5px;background:linear-gradient(90deg,#bdbec0,#b7b8ba);border-radius:4px"></div>
<div class="a" style="left:0px;top:1454px;width:2880px;height:2px;background:#c9c9c9"></div>
<span class="t" style="left:616.89px;top:1343.42px;font-size:41.5px;line-height:50px;color:#e8473a;transform:scaleX(1.0043);">Entrance to the basic operational settings of team dashboards</span>
</body></html>
